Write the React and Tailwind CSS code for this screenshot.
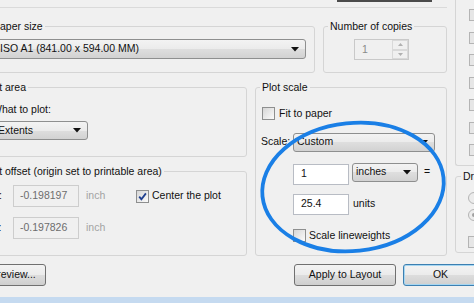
import React from 'react';

const Arrow = () => (
    <svg width="8" height="5" viewBox="0 0 8 5"><path d="M0 0h8L4 4.6z" fill="#111"/></svg>
);

function Combo({className, children}) {
    return (
        <div className={'flex items-center justify-between border border-[#8e8f8f] rounded-[3px] bg-[linear-gradient(#f3f3f3,#ebebeb_50%,#dedede_50%,#d2d2d2)] pl-[3px] pr-[6px] ' + className}>
            <span className='whitespace-nowrap'>{children}</span>
            <Arrow/>
        </div>
    )
}

function Check({checked}) {
    return (
        <span className='w-[13px] h-[13px] border border-[#8e8f8f] bg-[linear-gradient(135deg,#d6d6d6,#fbfbfb)] flex items-center justify-center shrink-0'>
            {checked && (
                <svg width="11" height="11" viewBox="0 0 11 11">
                    <path d="M2.2 5.6 L4.4 8.2 L8.9 2.4" stroke="#1f3f8f" strokeWidth="1.8" fill="none"/>
                </svg>
            )}
        </span>
    )
}

function Btn({className, children}) {
    return (
        <div className={'h-[22px] flex items-center justify-center rounded-[3px] bg-[linear-gradient(#f3f3f3,#ebebeb_50%,#dddddd_50%,#cfcfcf)] shrink-0 ' + className}>
            {children}
        </div>
    )
}

function Box({className, legend, legendClass, children}) {
    return (
        <fieldset className={'border border-[#d5d5d5] rounded-[3px] shrink-0 ' + className}>
            <legend className={'px-[2px] leading-[13px] ' + legendClass}>{legend}</legend>
            {children}
        </fieldset>
    )
}

function OffsetRow({axis, value, extra}) {
    return (
        <div className='flex items-center h-[22px]'>
            <span className='ml-[15px] w-[21px]'>{axis}:</span>
            <div className='w-[66px] h-[22px] border border-[#cdcdcd] flex items-center pl-[6px] text-[#6d6d6d]'>{value}</div>
            <span className='ml-[7px] w-[50px] text-[#a3a3a3]'>inch</span>
            {extra}
        </div>
    )
}

function App() {
    return (
        <div className="relative w-[474px] h-[303px] overflow-hidden bg-[#f0f0f0] text-[10.5px] text-[#111] font-['Liberation_Sans',Arial,sans-serif] flex flex-col">
            <div className='flex h-[256px] shrink-0'>
                {/* main column */}
                <div className='w-[471px] -ml-[24px] shrink-0 flex flex-col'>
                    <div className='h-[8px] border-b border-[#dadada] flex justify-end pr-[15px]'>
                        <div className='w-[95px] h-[2px] bg-[#4b4b4b]'></div>
                    </div>

                    <div className='flex mt-[12px]'>
                        <Box className='ml-[12px] w-[327px] h-[53px]' legend='Paper size' legendClass='ml-[2px]'>
                            <Combo className='ml-[7px] mt-[6px] w-[310px] h-[20px]'>ISO A1 (841.00 x 594.00 MM)</Combo>
                        </Box>
                        <Box className='ml-[8px] w-[124px] h-[53px]' legend='Number of copies' legendClass='ml-[4px]'>
                            <div className='ml-[30px] mt-[6px] w-[55px] h-[21px] border border-[#c9c9c9] flex'>
                                <span className='flex-1 pl-[7px] text-[#8a8a8a] flex items-center'>1</span>
                                <div className='w-[16px] flex flex-col'>
                                    <div className='flex-1 border border-[#d9d9d9] flex items-center justify-center'>
                                        <svg width="5" height="3" viewBox="0 0 5 3"><path d="M0 3h5L2.5 0z" fill="#b0b0b0"/></svg>
                                    </div>
                                    <div className='flex-1 border border-[#d9d9d9] flex items-center justify-center'>
                                        <svg width="5" height="3" viewBox="0 0 5 3"><path d="M0 0h5L2.5 3z" fill="#b0b0b0"/></svg>
                                    </div>
                                </div>
                            </div>
                        </Box>
                    </div>

                    <div className='flex mt-[8px]'>
                        <div className='w-[271px] flex flex-col'>
                            <Box className='w-[271px] h-[76px]' legend='Plot area' legendClass='ml-[5px]'>
                                <div className='ml-[15px] mt-[9px] leading-[13px]'>What to plot:</div>
                                <Combo className='ml-[17px] mt-[5px] w-[94px] h-[19px]'>Extents</Combo>
                            </Box>
                            <Box className='w-[271px] h-[91px] mt-[8px]' legend='Plot offset (origin set to printable area)' legendClass='ml-[5px]'>
                                <div className='mt-[7px] flex flex-col gap-[10px]'>
                                    <OffsetRow axis='X' value='-0.198197' extra={
                                        <div className='flex items-center gap-[3px]'>
                                            <Check checked/>
                                            <span>Center the plot</span>
                                        </div>
                                    }/>
                                    <OffsetRow axis='Y' value='-0.197826'/>
                                </div>
                            </Box>
                        </div>
                        <Box className='ml-[8px] w-[192px] h-[175px]' legend='Plot scale' legendClass='ml-[4px]'>
                            <div className='flex items-center ml-[6px] mt-[12px] gap-[4px]'>
                                <Check/>
                                <span>Fit to paper</span>
                            </div>
                            <div className='flex items-center ml-[5px] mt-[11px]'>
                                <span className='w-[32px]'>Scale:</span>
                                <Combo className='w-[142px] h-[19px]'>Custom</Combo>
                            </div>
                            <div className='flex items-start ml-[37px] mt-[12px]'>
                                <div className='w-[56px] h-[21px] border border-[#b8bcc4] bg-white flex items-center pl-[7px]'>1</div>
                                <Combo className='ml-[3px] -mt-[1px] w-[66px] h-[19px]'>inches</Combo>
                                <span className='ml-[6px] leading-[13px] mt-[1px]'>=</span>
                            </div>
                            <div className='flex items-center ml-[37px] mt-[9px]'>
                                <div className='w-[56px] h-[21px] border border-[#b8bcc4] bg-white flex items-center pl-[7px]'>25.4</div>
                                <span className='ml-[4px]'>units</span>
                            </div>
                            <div className='flex items-center ml-[37px] mt-[13px] gap-[3px]'>
                                <Check/>
                                <span>Scale lineweights</span>
                            </div>
                        </Box>
                    </div>
                </div>

                {/* right column, cut off by the window edge */}
                <div className='ml-[8px] w-[60px] shrink-0 flex flex-col'>
                    <div className='h-[166px] border-l border-b border-[#d5d5d5] rounded-bl-[3px] pl-[13px] pt-[9px] flex flex-col gap-[10.5px]'>
                        {[0, 1, 2, 3, 4, 5, 6].map(i => (
                            <span key={i} className='w-[12px] h-[12px] border border-[#b4b4b4] bg-[#e6e6e6] shrink-0'></span>
                        ))}
                    </div>
                    <Box className='mt-[4px] w-[60px] h-[83px]' legend='Drawing orientation' legendClass='ml-[5px] whitespace-nowrap'>
                        <div className='pl-[12px] mt-[9px] flex flex-col gap-[5px]'>
                            <span className='w-[12px] h-[12px] rounded-full border border-[#b4b4b4] bg-[#ececec]'></span>
                            <span className='w-[12px] h-[12px] rounded-full border border-[#b4b4b4] bg-[#ececec] flex items-center justify-center'>
                                <span className='w-[4px] h-[4px] rounded-full bg-[#a0a0a0]'></span>
                            </span>
                            <span className='mt-[10px] w-[12px] h-[12px] border border-[#b4b4b4] bg-[#e6e6e6]'></span>
                        </div>
                    </Box>
                </div>
            </div>

            <div className='flex mt-[8px] h-[22px] shrink-0'>
                <Btn className='-ml-[20px] w-[66px] border border-[#707070]'>Preview...</Btn>
                <Btn className='ml-[248px] w-[102px] border border-[#707070]'>Apply to Layout</Btn>
                <Btn className='ml-[7px] w-[75px] border border-[#3c7fb1] shadow-[inset_0_0_0_1px_#a6d6f1]'>OK</Btn>
            </div>

            <div className='mt-auto h-[6px] bg-[#c5daf0] shrink-0'></div>

            <svg className='absolute left-0 top-0 pointer-events-none' width="474" height="303">
                <ellipse cx="353" cy="187" rx="91" ry="64" transform="rotate(-6 353 187)" fill="none" stroke="#1a7fe6" strokeWidth="3.8"/>
            </svg>
        </div>
    )
}

export default App
